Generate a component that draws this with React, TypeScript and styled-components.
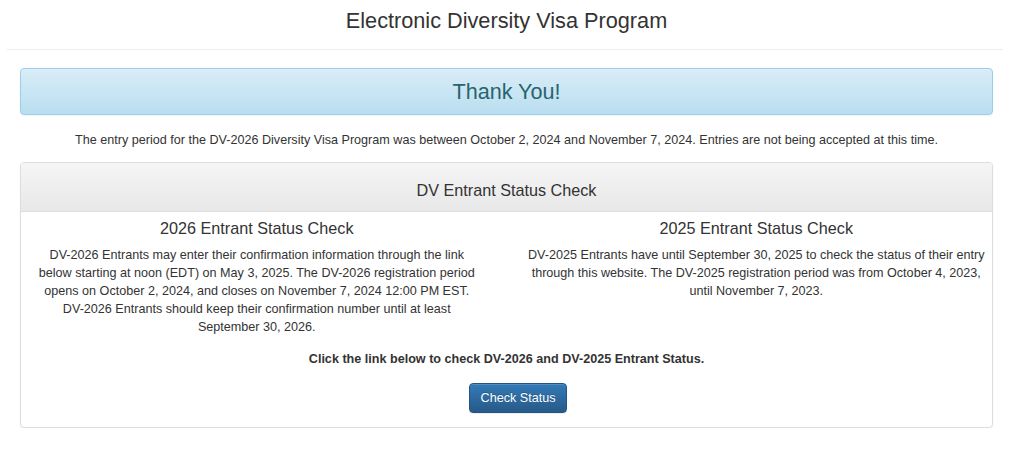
import React from "react";
import styled, { createGlobalStyle } from "styled-components";

const Global = createGlobalStyle`
  html, body { margin: 0; padding: 0; background: #fff; }
  body {
    font-family: "Liberation Sans", Arial, Helvetica, sans-serif;
    color: #333;
    font-size: 12.6px;
  }
`;

const Page = styled.div`
  width: 1013px;
`;

const Header = styled.header`
  margin: 0 10px 0 7px;
  height: 49px;
  border-bottom: 1px solid #eeeeee;
  display: flex;
  justify-content: center;
  align-items: flex-start;
`;

const Title = styled.h1`
  margin: 0;
  padding-top: 9px;
  margin-left: 3px;
  font-size: 21.7px;
  line-height: 24px;
  font-weight: normal;
  color: #333;
`;

const Container = styled.main`
  padding: 18px 20px 0 20px;
`;

const Alert = styled.div`
  border: 1px solid #9acfea;
  border-radius: 4px;
  background-image: linear-gradient(to bottom, #d9edf7 0%, #b9def0 100%);
  box-shadow: inset 0 1px 0 rgba(255, 255, 255, 0.25), 0 1px 2px rgba(0, 0, 0, 0.05);
  padding: 10px 15px;
  text-align: center;
`;

const AlertTitle = styled.h2`
  margin: 0;
  font-size: 21.6px;
  line-height: 25px;
  font-weight: normal;
  color: #28646f;
`;

const Notice = styled.p`
  margin: 16px 0 13px;
  text-align: center;
  line-height: 18px;
`;

const Panel = styled.section`
  border: 1px solid #dddddd;
  border-radius: 4px;
  box-shadow: 0 1px 2px rgba(0, 0, 0, 0.05);
  background: #fff;
`;

const PanelHeading = styled.div`
  background-image: linear-gradient(to bottom, #f5f5f5 0%, #e8e8e8 100%);
  border-bottom: 1px solid #dddddd;
  border-radius: 3px 3px 0 0;
  padding: 18px 15px 12px;
  text-align: center;
`;

const PanelTitle = styled.h3`
  margin: 0;
  font-size: 16.2px;
  line-height: 18px;
  font-weight: normal;
  color: #333;
`;

const PanelBody = styled.div`
  padding: 6px 0 14px;
  display: flex;
  flex-direction: column;
  align-items: center;
`;

const Columns = styled.div`
  width: 100%;
  display: grid;
  grid-template-columns: 1fr 1fr;
  column-gap: 28px;
`;

const Column = styled.div<{ $textWidth: number }>`
  display: flex;
  flex-direction: column;
  align-items: center;
  text-align: center;

  & > p {
    width: ${(p) => p.$textWidth}px;
  }
`;

const ColumnTitle = styled.h4`
  margin: 0;
  font-size: 16.2px;
  line-height: 20px;
  font-weight: normal;
  color: #333;
`;

const ColumnText = styled.p`
  margin: 8px 0 0;
  line-height: 18px;
`;

const CallToAction = styled.p`
  margin: 14px 0 0;
  font-weight: bold;
  line-height: 18px;
  text-align: center;
`;

const Button = styled.button`
  margin: 15px 0 0 23px;
  height: 30px;
  padding: 0 11px;
  font-family: inherit;
  font-size: 12.6px;
  color: #fff;
  border: 1px solid #245580;
  border-radius: 4px;
  background-image: linear-gradient(to bottom, #337ab7 0%, #265a88 100%);
  box-shadow: inset 0 1px 0 rgba(255, 255, 255, 0.15), 0 1px 1px rgba(0, 0, 0, 0.075);
  text-shadow: 0 -1px 0 rgba(0, 0, 0, 0.2);
  cursor: pointer;
`;

export default function App() {
  return (
    <Page>
      <Global />
      <Header>
        <Title>Electronic Diversity Visa Program</Title>
      </Header>
      <Container>
        <Alert>
          <AlertTitle>Thank You!</AlertTitle>
        </Alert>
        <Notice>
          The entry period for the DV-2026 Diversity Visa Program was between October 2, 2024 and
          November 7, 2024. Entries are not being accepted at this time.
        </Notice>
        <Panel>
          <PanelHeading>
            <PanelTitle>DV Entrant Status Check</PanelTitle>
          </PanelHeading>
          <PanelBody>
            <Columns>
              <Column $textWidth={445}>
                <ColumnTitle>2026 Entrant Status Check</ColumnTitle>
                <ColumnText>
                  DV-2026 Entrants may enter their confirmation information through the link below
                  starting at noon (EDT) on May 3, 2025. The DV-2026 registration period opens on
                  October 2, 2024, and closes on November 7, 2024 12:00 PM EST. DV-2026 Entrants
                  should keep their confirmation number until at least September 30, 2026.
                </ColumnText>
              </Column>
              <Column $textWidth={468}>
                <ColumnTitle>2025 Entrant Status Check</ColumnTitle>
                <ColumnText>
                  DV-2025 Entrants have until September 30, 2025 to check the status of their entry
                  through this website. The DV-2025 registration period was from October 4, 2023,
                  until November 7, 2023.
                </ColumnText>
              </Column>
            </Columns>
            <CallToAction>
              Click the link below to check DV-2026 and DV-2025 Entrant Status.
            </CallToAction>
            <Button type="button">Check Status</Button>
          </PanelBody>
        </Panel>
      </Container>
    </Page>
  );
}
